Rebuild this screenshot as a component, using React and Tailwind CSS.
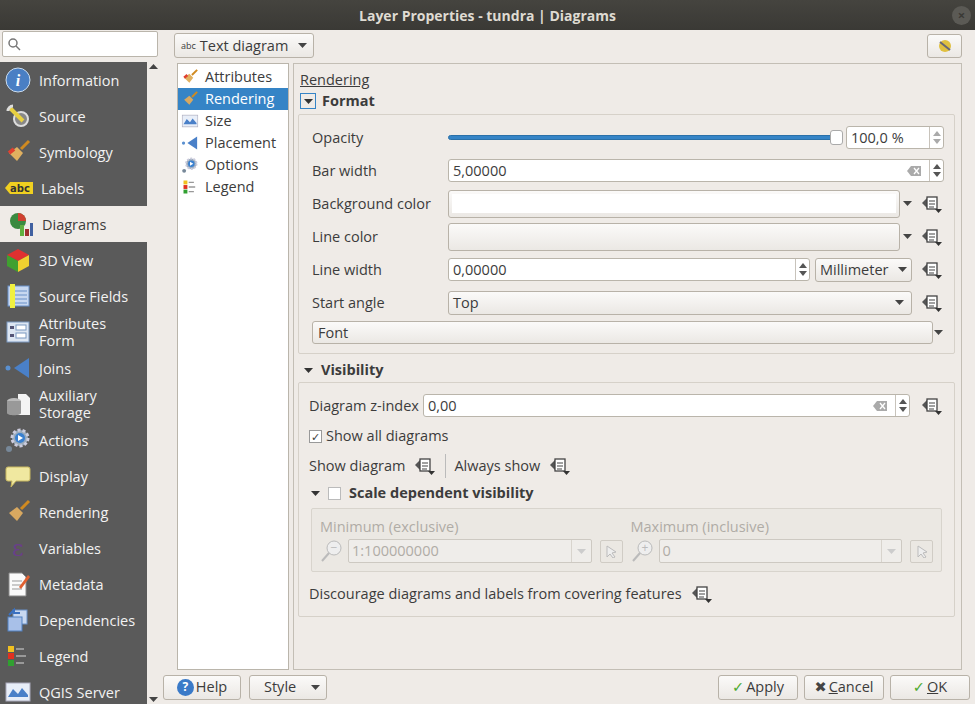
import React from "react";

const DD = () => (
  <svg width="24" height="20" viewBox="0 0 24 20" className="shrink-0">
    <path d="M2 9 L7 4 L7 14 Z" fill="#555" />
    <rect x="7" y="3" width="10" height="12" fill="#fff" stroke="#444" strokeWidth="1.3" />
    <path d="M9 7h6M9 10h6M9 13h5" stroke="#444" strokeWidth="1.2" />
    <path d="M15 15h7l-3.5 4z" fill="#333" />
  </svg>
);

const Spin = ({ dim }) => (
  <div className="flex flex-col justify-center items-center w-[14px] h-full gap-[3px] border-l border-[#c8c3bb]">
    <svg width="8" height="5"><path d="M0 5 L4 0 L8 5Z" fill={dim ? "#aaa" : "#555"} /></svg>
    <svg width="8" height="5"><path d="M0 0 L4 5 L8 0Z" fill={dim ? "#aaa" : "#555"} /></svg>
  </div>
);

const Clear = () => (
  <svg width="14" height="10" className="mr-2"><path d="M4 0h10v10H4L0 5z" fill="#aaa" /><path d="M7 2l5 6M12 2l-5 6" stroke="#fff" strokeWidth="1.3" /></svg>
);

const Caret = ({ c = "#444" }) => (
  <svg width="9" height="5"><path d="M0 0 L9 0 L4.5 5Z" fill={c} /></svg>
);

const side = [
  ["Information", "info"], ["Source", "src"], ["Symbology", "sym"], ["Labels", "abc"],
  ["Diagrams", "dia"], ["3D View", "cube"], ["Source Fields", "fields"], ["Attributes\nForm", "form"],
  ["Joins", "joins"], ["Auxiliary\nStorage", "db"], ["Actions", "gear"], ["Display", "bubble"],
  ["Rendering", "brush"], ["Variables", "eps"], ["Metadata", "meta"], ["Dependencies", "dep"],
  ["Legend", "leg"], ["QGIS Server", "srv"],
];

const Icon = ({ k }) => {
  const s = { width: 26, height: 26, viewBox: "0 0 26 26" };
  switch (k) {
    case "info":
      return <svg {...s}><circle cx="13" cy="13" r="12" fill="#4a7fc4" stroke="#cde" /><text x="13" y="19" fontSize="16" fontStyle="italic" fontWeight="bold" fill="#fff" textAnchor="middle" fontFamily="serif">i</text></svg>;
    case "src":
      return <svg {...s}><circle cx="16" cy="16" r="7" fill="#888" stroke="#ddd" strokeWidth="2" /><path d="M4 4l14 14" stroke="#e8d040" strokeWidth="4" /><path d="M3 8a5 5 0 0 1 5-5" stroke="#ddd" strokeWidth="3" fill="none" /></svg>;
    case "sym": case "brush":
      return <svg {...s}><path d="M16 10L24 2" stroke="#d08a20" strokeWidth="3" /><path d="M4 14l8-6 6 6-6 8z" fill={k === "sym" ? "#e0b060" : "#d8a860"} /><path d="M4 14l5-4" stroke="#e04030" strokeWidth={k === "sym" ? 4 : 0} /></svg>;
    case "abc":
      return <svg width="28" height="26" viewBox="0 0 28 26"><path d="M0 13l5-6h23v12H5z" fill="#f0d020" /><text x="15" y="17" fontSize="10" fontWeight="bold" textAnchor="middle" fill="#333" fontFamily="DejaVu Sans">abc</text></svg>;
    case "dia":
      return <svg {...s}><circle cx="10" cy="10" r="8" fill="#3a8a40" /><path d="M10 10V2a8 8 0 0 1 8 8z" fill="#d04030" /><rect x="12" y="14" width="4" height="11" fill="#60b040" /><rect x="17" y="18" width="4" height="7" fill="#a03030" /><rect x="22" y="12" width="3" height="13" fill="#4060a0" /></svg>;
    case "cube":
      return <svg {...s}><path d="M13 2l11 6-11 6L2 8z" fill="#e03030" /><path d="M2 8l11 6v11L2 19z" fill="#40a030" /><path d="M24 8l-11 6v11l11-6z" fill="#f0d030" /></svg>;
    case "fields":
      return <svg {...s}><rect x="3" y="3" width="21" height="20" fill="#c8d8f0" stroke="#6890c8" /><path d="M6 8h16M6 12h16M6 16h16M6 20h16" stroke="#6890c8" /><rect x="5" y="1" width="5" height="24" fill="#f0f040" /></svg>;
    case "form":
      return <svg {...s}><rect x="2" y="3" width="22" height="20" fill="#dde6f2" stroke="#7a98c0" /><rect x="5" y="7" width="4" height="3" fill="#557" /><rect x="11" y="6" width="10" height="5" fill="#fff" stroke="#7a98c0" /><rect x="5" y="15" width="4" height="3" fill="#557" /><rect x="11" y="14" width="10" height="5" fill="#fff" stroke="#7a98c0" /></svg>;
    case "joins":
      return <svg {...s}><circle cx="3" cy="13" r="2.5" fill="#5a90d0" /><path d="M24 3v20L9 13z" fill="#4a80c8" /></svg>;
    case "db":
      return <svg {...s}><path d="M13 3h8l4 4v17H13z" fill="#f4f4f4" /><ellipse cx="9" cy="10" rx="7" ry="3" fill="#bbb" /><path d="M2 10v12c0 3 14 3 14 0V10" fill="#999" /></svg>;
    case "gear":
      return <svg {...s}><circle cx="15" cy="11" r="8" fill="#9ab" stroke="#ccd" strokeWidth="3" strokeDasharray="3 2" /><circle cx="15" cy="11" r="5" fill="#3a80d0" /><path d="M13 8l5 3-5 3z" fill="#fff" /><circle cx="4" cy="22" r="3" fill="#789" /></svg>;
    case "bubble":
      return <svg {...s}><path d="M3 4h20a2 2 0 0 1 2 2v10a2 2 0 0 1-2 2H11l-5 6 1-6H3a2 2 0 0 1-2-2V6a2 2 0 0 1 2-2z" fill="#f0e8a0" stroke="#c8b860" /></svg>;
    case "eps":
      return <svg {...s}><text x="13" y="21" fontSize="22" textAnchor="middle" fill="#6a3e8a" fontFamily="DejaVu Serif">ε</text></svg>;
    case "meta":
      return <svg {...s}><path d="M4 2h13l4 4v19H4z" fill="#fafafa" stroke="#888" /><path d="M7 10h10M7 14h10M7 18h10" stroke="#999" /><path d="M14 16l9-12 2 2-9 12z" fill="#e06030" /></svg>;
    case "dep":
      return <svg {...s}><rect x="8" y="3" width="14" height="14" fill="#c8d8f0" stroke="#6890c8" /><rect x="3" y="10" width="14" height="14" fill="#a8c0e8" stroke="#5080c0" /><path d="M4 8l5-5v3h6" stroke="#3a70c0" strokeWidth="2" fill="none" /></svg>;
    case "leg":
      return <svg {...s}><rect x="3" y="3" width="6" height="6" fill="#f0c020" /><rect x="3" y="10" width="6" height="6" fill="#e03020" /><rect x="3" y="17" width="6" height="6" fill="#30a030" /><path d="M11 6h8M11 13h10M11 20h8" stroke="#999" strokeWidth="2" /></svg>;
    case "srv":
      return <svg {...s}><rect x="1" y="4" width="24" height="18" fill="#e8eef8" stroke="#aab" /><path d="M3 18l5-8 5 5 4-6 6 7v2H3z" fill="#4a80c8" /></svg>;
    default:
      return null;
  }
};

const tree = [
  ["Attributes", "sym"], ["Rendering", "brush"], ["Size", "srv"], ["Placement", "joins"], ["Options", "gear"], ["Legend", "leg"],
];

const field = "bg-white border border-[#bab5ab] rounded-[3px] h-[23px] flex items-center";
const btn = "border border-[#b8b2a8] rounded-[3px] bg-gradient-to-b from-[#fbfaf9] to-[#ebe8e4] flex items-center";

const Row = ({ label, children }) => (
  <div className="flex items-center h-[33px]">
    <div className="w-[136px] shrink-0">{label}</div>
    <div className="flex-1 flex items-center gap-[2px]">{children}</div>
  </div>
);

export default function App() {
  return (
    <div className="w-[975px] h-[704px] overflow-hidden bg-[#efebe7] text-[14.5px] text-[#3c3c3c] flex flex-col" style={{ fontFamily: "'Open Sans', 'DejaVu Sans', sans-serif" }}>
      {/* title bar */}
      <div className="h-[30px] shrink-0 bg-gradient-to-b from-[#45443f] to-[#3a3935] flex items-center justify-center relative">
        <span className="font-bold text-[#dfdbd2] text-[14px]">Layer Properties - tundra | Diagrams</span>
        <div className="absolute right-[4px] top-[6px] w-[19px] h-[19px] rounded-full bg-[#5b5a55] flex items-center justify-center text-[#3a3935] text-[13px] font-bold">×</div>
      </div>

      <div className="flex flex-1 min-h-0">
        {/* left column */}
        <div className="w-[160px] shrink-0 flex flex-col">
          <div className="h-[26px] mx-[2px] mt-[1px] bg-white border border-[#bab5ab] rounded-[2px] flex items-center px-[5px] shrink-0">
            <svg width="13" height="13"><circle cx="5" cy="5" r="4" stroke="#777" strokeWidth="1.5" fill="none" /><path d="M8 8l4 4" stroke="#777" strokeWidth="1.5" /></svg>
          </div>
          <div className="flex flex-1 min-h-0 mt-[5px]">
            <div className="w-[147px] bg-[#5a5a5a] overflow-hidden">
              {side.map(([t, k]) => {
                const sel = t === "Diagrams";
                return (
                  <div key={t} className={"h-[36px] flex items-center gap-[8px] pl-[5px] " + (sel ? "bg-[#efebe7] text-[#3c3c3c] pl-[8px]" : "text-[#f2f2f2]")}>
                    <Icon k={k} />
                    <span className="leading-[17px] whitespace-pre text-[14.5px]">{t}</span>
                  </div>
                );
              })}
            </div>
            <div className="w-[13px] bg-[#efebe7] flex flex-col justify-between items-center py-[2px]">
              <svg width="9" height="5"><path d="M0 5L4.5 0L9 5Z" fill="#444" /></svg>
              <svg width="9" height="5"><path d="M0 0L4.5 5L9 0Z" fill="#444" /></svg>
            </div>
          </div>
        </div>

        {/* right column */}
        <div className="flex-1 flex flex-col pl-[14px] pr-[5px]">
          <div className="flex items-center justify-between h-[30px] pt-[1px]">
            <div className={btn + " h-[25px] px-[6px] gap-[4px]"}>
              <span className="text-[9px]">abc</span>
              <span>Text diagram</span>
              <span className="ml-[6px]"><Caret /></span>
            </div>
            <div className={btn + " h-[24px] w-[35px] justify-center mr-[8px]"}>
              <svg width="18" height="16"><circle cx="9" cy="8" r="6" fill="#e0c040" /><path d="M4 4l10 8" stroke="#667" strokeWidth="2" /></svg>
            </div>
          </div>

          <div className="flex flex-1 min-h-0 mt-[3px]">
            <div className="w-[112px] ml-[3px] bg-white border border-[#bab5ab] py-[2px]">
              {tree.map(([t, k]) => (
                <div key={t} className={"h-[22px] flex items-center gap-[6px] pl-[3px] " + (t === "Rendering" ? "bg-[#3584c6] text-white" : "")}>
                  <div className="scale-[0.65] -m-[4px]"><Icon k={k} /></div>
                  <span>{t}</span>
                </div>
              ))}
            </div>
            <div className="w-[4px]" />
            <div className="flex-1 border border-[#c3beb5] pl-[4px] pr-[6px] pt-[6px] flex flex-col mr-[8px]">
              <span className="underline ml-[2px] leading-[20px]">Rendering</span>
              <div className="flex items-center gap-[6px] h-[22px] ml-[2px]">
                <div className="w-[16px] h-[16px] border border-[#3584c6] flex items-center justify-center"><Caret c="#333" /></div>
                <span className="font-bold">Format</span>
              </div>
              <div className="border border-[#d6d1c9] rounded-[2px] mt-[2px] pl-[13px] pr-[10px] pt-[6px] pb-[9px]">
                <Row label="Opacity">
                  <div className="flex-1 h-[5px] rounded bg-[#3584c6] border border-[#2a70a8] relative mr-[8px]">
                    <div className="absolute right-[-8px] -top-[6px] w-[13px] h-[15px] bg-white border border-[#aaa] rounded-[3px]" />
                  </div>
                  <div className={field + " w-[98px] pl-[4px] justify-between"}><span>100,0 %</span><Spin dim /></div>
                </Row>
                <Row label="Bar width">
                  <div className={field + " flex-1 pl-[4px] justify-between"}><span>5,00000</span><div className="flex items-center h-full"><Clear /><Spin /></div></div>
                </Row>
                <Row label="Background color">
                  <div className={btn + " flex-1 h-[28px] px-[3px]"}><div className="w-full h-[19px] bg-white" /></div>
                  <div className="w-[10px] flex justify-center"><Caret /></div>
                  <div className="ml-[6px]"><DD /></div>
                </Row>
                <Row label="Line color">
                  <div className={btn + " flex-1 h-[28px]"} />
                  <div className="w-[10px] flex justify-center"><Caret /></div>
                  <div className="ml-[6px]"><DD /></div>
                </Row>
                <Row label="Line width">
                  <div className={field + " flex-1 pl-[4px] justify-between"}><span>0,00000</span><Spin /></div>
                  <div className={btn + " h-[24px] w-[97px] px-[4px] justify-between ml-[3px]"}><span>Millimeter</span><Caret /></div>
                  <div className="ml-[6px]"><DD /></div>
                </Row>
                <Row label="Start angle">
                  <div className={btn + " flex-1 h-[24px] px-[4px] justify-between"}><span>Top</span><span className="mr-[3px]"><Caret /></span></div>
                  <div className="ml-[6px]"><DD /></div>
                </Row>
                <div className="flex items-center mt-[2px]">
                  <div className={btn + " flex-1 h-[23px] px-[5px]"}>Font</div>
                  <div className="w-[11px] flex justify-center"><Caret /></div>
                </div>
              </div>

              <div className="flex items-center gap-[8px] h-[24px] mt-[4px] ml-[6px]">
                <Caret c="#333" />
                <span className="font-bold">Visibility</span>
              </div>
              <div className="border border-[#d6d1c9] rounded-[2px] px-[10px] pt-[11px] pb-[10px] flex flex-col">
                <div className="flex items-center gap-[4px]">
                  <span>Diagram z-index</span>
                  <div className={field + " flex-1 pl-[4px] justify-between"}><span>0,00</span><div className="flex items-center h-full"><Clear /><Spin /></div></div>
                  <div className="ml-[6px]"><DD /></div>
                </div>
                <div className="flex items-center gap-[4px] mt-[8px] h-[22px]">
                  <div className="w-[13px] h-[13px] bg-white border border-[#999] flex items-center justify-center text-[11px] leading-none">✓</div>
                  <span>Show all diagrams</span>
                </div>
                <div className="flex items-center gap-[8px] mt-[7px] h-[24px]">
                  <span>Show diagram</span><DD />
                  <div className="w-px h-[24px] bg-[#bbb]" />
                  <span>Always show</span><DD />
                </div>
                <div className="flex items-center gap-[8px] mt-[4px] h-[22px] ml-[2px]">
                  <Caret c="#333" />
                  <div className="w-[13px] h-[13px] bg-white border border-[#bbb]" />
                  <span className="font-bold">Scale dependent visibility</span>
                </div>
                <div className="border border-[#d8d4cd] bg-[#ebe8e3] rounded-[2px] mx-[2px] mt-[4px] px-[8px] pt-[8px] pb-[8px] grid grid-cols-2 gap-x-[8px] text-[#b0aca6]">
                  {[["Minimum (exclusive)", "1:100000000", "−"], ["Maximum (inclusive)", "0", "+"]].map(([l, v, sg]) => (
                    <div key={l} className="flex flex-col">
                      <span className="leading-[20px]">{l}</span>
                      <div className="flex items-center gap-[4px] mt-[2px]">
                        <svg width="24" height="24" className="shrink-0"><circle cx="14" cy="9" r="7" fill="#eee" stroke="#bbb" /><text x="14" y="13" fontSize="12" textAnchor="middle" fill="#bbb">{sg}</text><path d="M9 14l-7 8" stroke="#bbb" strokeWidth="2" /></svg>
                        <div className="flex-1 h-[24px] border border-[#cdc9c2] bg-[#efedea] rounded-[2px] flex items-center justify-between pl-[3px]">
                          <span>{v}</span>
                          <div className="w-[20px] h-full border-l border-[#d8d4cd] flex items-center justify-center"><Caret c="#ccc" /></div>
                        </div>
                        <div className="w-[23px] h-[23px] border border-[#d0ccc5] rounded-[2px] ml-[4px] flex items-center justify-center">
                          <svg width="14" height="14"><path d="M3 2l9 6-4 1 3 4-2 1-3-4-3 3z" fill="#eee" stroke="#bbb" /></svg>
                        </div>
                      </div>
                    </div>
                  ))}
                </div>
                <div className="flex items-center gap-[8px] mt-[10px] h-[24px]">
                  <span>Discourage diagrams and labels from covering features</span><DD />
                </div>
              </div>
            </div>
          </div>

          <div className="h-[34px] flex items-center gap-[8px] -ml-[11px]">
            <div className={btn + " h-[25px] w-[78px] justify-center gap-[2px]"}>
              <div className="w-[17px] h-[17px] rounded-full bg-[#3a7ac8] text-white text-[12px] font-bold flex items-center justify-center">?</div>Help
            </div>
            <div className={btn + " h-[25px] w-[78px] justify-between pl-[14px] pr-[6px]"}><span>Style</span><Caret /></div>
            <div className="flex-1" />
            <div className={btn + " h-[25px] w-[80px] justify-center gap-[2px]"}><span className="text-[#4caa30] font-bold">✓</span><span>Apply</span></div>
            <div className={btn + " h-[25px] w-[80px] justify-center gap-[2px] -ml-[2px]"}><span className="text-[#444]">✖</span><span className="underline decoration-1">C</span><span className="-ml-[2px]">ancel</span></div>
            <div className={btn + " h-[25px] w-[80px] justify-center gap-[2px] -ml-[2px] border-[#3584c6]"}><span className="text-[#4caa30] font-bold">✓</span><span className="underline">O</span><span className="-ml-[2px]">K</span></div>
          </div>
        </div>
      </div>
    </div>
  );
}
